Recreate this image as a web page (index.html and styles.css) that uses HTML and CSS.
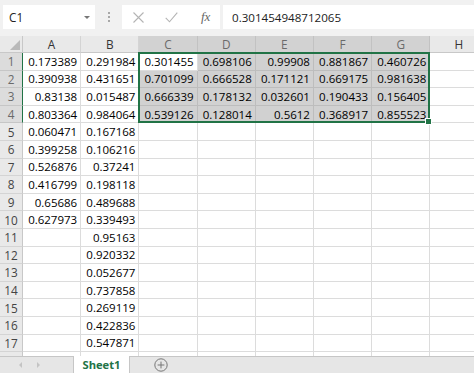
FILE: index.html
```html
<!DOCTYPE html>
<html>
<head>
<meta charset="utf-8">
<link rel="stylesheet" href="styles.css">
</head>
<body>
<div class="app">
  <div class="toolbar">
    <div class="namebox"><span>C1</span><span class="caret"></span></div>
    <div class="dots"><i></i><i></i><i></i></div>
    <div class="fxbox">
      <svg class="ic-x" width="11" height="11" viewBox="0 0 11 11"><path d="M0.5 0.5L10.5 10.5M10.5 0.5L0.5 10.5" stroke="#b4b4b4" stroke-width="1.1" fill="none"/></svg>
      <svg class="ic-ok" width="13" height="11" viewBox="0 0 13 11"><path d="M0.7 5.8L4.5 9.8L12.3 0.6" stroke="#b4b4b4" stroke-width="1.1" fill="none"/></svg>
      <span class="fx">fx</span>
    </div>
    <div class="formula">0.301454948712065</div>
  </div>
  <div class="sheet">
    <div class="grid">
      <div class="corner"><span class="tri"></span></div>
      <div class="ch">A</div><div class="ch">B</div><div class="ch hl">C</div><div class="ch hl">D</div><div class="ch hl">E</div><div class="ch hl">F</div><div class="ch hl">G</div><div class="ch">H</div>

      <div class="rh hl">1</div><div class="c">0.173389</div><div class="c">0.291984</div><div class="c a">0.301455</div><div class="c s">0.698106</div><div class="c s">0.99908</div><div class="c s">0.881867</div><div class="c s">0.460726</div><div class="c"></div>
      <div class="rh hl">2</div><div class="c">0.390938</div><div class="c">0.431651</div><div class="c s">0.701099</div><div class="c s">0.666528</div><div class="c s">0.171121</div><div class="c s">0.669175</div><div class="c s">0.981638</div><div class="c"></div>
      <div class="rh hl">3</div><div class="c">0.83138</div><div class="c">0.015487</div><div class="c s">0.666339</div><div class="c s">0.178132</div><div class="c s">0.032601</div><div class="c s">0.190433</div><div class="c s">0.156405</div><div class="c"></div>
      <div class="rh hl">4</div><div class="c">0.803364</div><div class="c">0.984064</div><div class="c s">0.539126</div><div class="c s">0.128014</div><div class="c s">0.5612</div><div class="c s">0.368917</div><div class="c s">0.855523</div><div class="c"></div>
      <div class="rh">5</div><div class="c">0.060471</div><div class="c">0.167168</div><div class="c"></div><div class="c"></div><div class="c"></div><div class="c"></div><div class="c"></div><div class="c"></div>
      <div class="rh">6</div><div class="c">0.399258</div><div class="c">0.106216</div><div class="c"></div><div class="c"></div><div class="c"></div><div class="c"></div><div class="c"></div><div class="c"></div>
      <div class="rh">7</div><div class="c">0.526876</div><div class="c">0.37241</div><div class="c"></div><div class="c"></div><div class="c"></div><div class="c"></div><div class="c"></div><div class="c"></div>
      <div class="rh">8</div><div class="c">0.416799</div><div class="c">0.198118</div><div class="c"></div><div class="c"></div><div class="c"></div><div class="c"></div><div class="c"></div><div class="c"></div>
      <div class="rh">9</div><div class="c">0.65686</div><div class="c">0.489688</div><div class="c"></div><div class="c"></div><div class="c"></div><div class="c"></div><div class="c"></div><div class="c"></div>
      <div class="rh">10</div><div class="c">0.627973</div><div class="c">0.339493</div><div class="c"></div><div class="c"></div><div class="c"></div><div class="c"></div><div class="c"></div><div class="c"></div>
      <div class="rh">11</div><div class="c"></div><div class="c">0.95163</div><div class="c"></div><div class="c"></div><div class="c"></div><div class="c"></div><div class="c"></div><div class="c"></div>
      <div class="rh">12</div><div class="c"></div><div class="c">0.920332</div><div class="c"></div><div class="c"></div><div class="c"></div><div class="c"></div><div class="c"></div><div class="c"></div>
      <div class="rh">13</div><div class="c"></div><div class="c">0.052677</div><div class="c"></div><div class="c"></div><div class="c"></div><div class="c"></div><div class="c"></div><div class="c"></div>
      <div class="rh">14</div><div class="c"></div><div class="c">0.737858</div><div class="c"></div><div class="c"></div><div class="c"></div><div class="c"></div><div class="c"></div><div class="c"></div>
      <div class="rh">15</div><div class="c"></div><div class="c">0.269119</div><div class="c"></div><div class="c"></div><div class="c"></div><div class="c"></div><div class="c"></div><div class="c"></div>
      <div class="rh">16</div><div class="c"></div><div class="c">0.422836</div><div class="c"></div><div class="c"></div><div class="c"></div><div class="c"></div><div class="c"></div><div class="c"></div>
      <div class="rh">17</div><div class="c"></div><div class="c">0.547871</div><div class="c"></div><div class="c"></div><div class="c"></div><div class="c"></div><div class="c"></div><div class="c"></div>
      <div class="rh">18</div><div class="c"></div><div class="c">0.842737</div><div class="c"></div><div class="c"></div><div class="c"></div><div class="c"></div><div class="c"></div><div class="c"></div>

      <div class="selection"><span class="handle"></span></div>
    </div>
  </div>
  <div class="tabbar">
    <div class="nav"><span class="arr left"></span><span class="arr right"></span></div>
    <div class="tab">Sheet1</div>
    <div class="add">
      <svg width="14" height="14" viewBox="0 0 14 14"><circle cx="7" cy="7" r="6.2" stroke="#777" stroke-width="1" fill="none"/><path d="M7 3.6V10.4M3.6 7H10.4" stroke="#777" stroke-width="1"/></svg>
    </div>
  </div>
</div>
</body>
</html>
```

FILE: styles.css
```css
html, body {
  margin: 0;
  padding: 0;
  background: #ffffff;
}
.app {
  width: 474px;
  height: 373px;
  overflow: hidden;
  display: flex;
  flex-direction: column;
  font-family: "Open Sans", "Liberation Sans", sans-serif;
  font-size: 11.5px;
  color: #000;
}
.toolbar {
  height: 36px;
  flex: none;
  background: #f1f1f1;
  display: flex;
  align-items: flex-start;
  padding-top: 5px;
  box-sizing: border-box;
}
.namebox {
  margin-left: 3px;
  width: 92px;
  height: 24px;
  box-sizing: border-box;
  background: #fff;
  display: flex;
  align-items: center;
  justify-content: space-between;
  padding: 0 5px 0 6px;
  font-size: 11.8px;
  color: #222;
}
.caret {
  width: 0;
  height: 0;
  border-left: 3px solid transparent;
  border-right: 3px solid transparent;
  border-top: 3px solid #777;
  margin-top: 1px;
}
.dots {
  width: 27px;
  height: 24px;
  display: flex;
  flex-direction: column;
  align-items: center;
  justify-content: center;
  gap: 2px;
}
.dots i {
  display: block;
  width: 2px;
  height: 2px;
  background: #a8a8a8;
}
.fxbox {
  width: 98px;
  height: 24px;
  background: #fff;
  display: flex;
  align-items: center;
  position: relative;
}
.ic-x { margin-left: 11px; }
.ic-ok { margin-left: 21px; }
.fx {
  margin-left: 23px;
  font-family: "Liberation Serif", serif;
  font-style: italic;
  font-size: 13px;
  color: #666;
}
.formula {
  margin-left: 3px;
  flex: 1;
  height: 24px;
  background: #fff;
  display: flex;
  align-items: center;
  padding-left: 9px;
  font-size: 11.6px;
  color: #222;
}
.sheet {
  height: 320px;
  flex: none;
  overflow: hidden;
  background: #fff;
}
.grid {
  position: relative;
  display: grid;
  grid-template-columns: 23px repeat(7, 58.2px) 58px;
  grid-template-rows: 17px repeat(18, 17.6px);
  width: 488px;
}
.grid > div {
  box-sizing: border-box;
}
.corner {
  background: #e9e9e9;
  border-right: 1px solid #c8c8c8;
  border-bottom: 1px solid #c8c8c8;
  position: relative;
}
.tri {
  position: absolute;
  right: 2px;
  bottom: 2px;
  width: 0;
  height: 0;
  border-left: 10px solid transparent;
  border-bottom: 10px solid #b9b9b9;
}
.ch {
  background: #e9e9e9;
  border-right: 1px solid #d4d4d4;
  border-bottom: 1px solid #c8c8c8;
  display: flex;
  align-items: center;
  justify-content: center;
  color: #333;
  font-size: 11.8px;
}
.ch.hl {
  background: #d2d2d2;
  color: #6a6a6a;
  border-right-color: #c2c2c2;
}
.rh {
  background: #e9e9e9;
  border-right: 1px solid #c8c8c8;
  border-bottom: 1px solid #d4d4d4;
  display: flex;
  align-items: center;
  justify-content: center;
  color: #444;
  font-size: 11.8px;
}
.rh.hl {
  background: #dcdcdc;
  color: #6a6a6a;
  border-right: 1px solid #217346;
  border-bottom-color: #c6c6c6;
}
.c {
  border-right: 1px solid #dcdcdc;
  border-bottom: 1px solid #dcdcdc;
  display: flex;
  align-items: center;
  justify-content: flex-end;
  padding-right: 3px;
  white-space: nowrap;
  overflow: hidden;
}
.c.s {
  background: #d1d1d1;
  border-right-color: #bdbdbd;
  border-bottom-color: #bdbdbd;
}
.c.a {
  background: #fff;
}
.selection {
  position: absolute;
  left: 138.4px;
  top: 16px;
  width: 292px;
  height: 71.4px;
  border: 2px solid #217346;
  box-sizing: border-box;
  pointer-events: none;
}
.handle {
  position: absolute;
  right: -4px;
  bottom: -4px;
  width: 5px;
  height: 5px;
  background: #217346;
  border: 1px solid #fff;
}
.tabbar {
  flex: 1;
  background: #e6e6e6;
  border-top: 1px solid #c6c6c6;
  box-sizing: border-box;
  display: flex;
  align-items: stretch;
}
.nav {
  width: 73px;
  display: flex;
  align-items: center;
  padding-left: 19px;
  gap: 15px;
  box-sizing: border-box;
}
.arr {
  width: 0;
  height: 0;
  border-top: 3px solid transparent;
  border-bottom: 3px solid transparent;
}
.arr.left { border-right: 3px solid #c4c4c4; }
.arr.right { border-left: 3px solid #c4c4c4; }
.tab {
  width: 57px;
  background: #fff;
  border-left: 1px solid #c6c6c6;
  border-right: 1px solid #c6c6c6;
  margin-top: -1px;
  box-sizing: border-box;
  display: flex;
  align-items: center;
  justify-content: center;
  color: #217346;
  font-weight: bold;
  font-size: 11.2px;
}
.add {
  width: 62px;
  display: flex;
  align-items: center;
  justify-content: center;
}
```
